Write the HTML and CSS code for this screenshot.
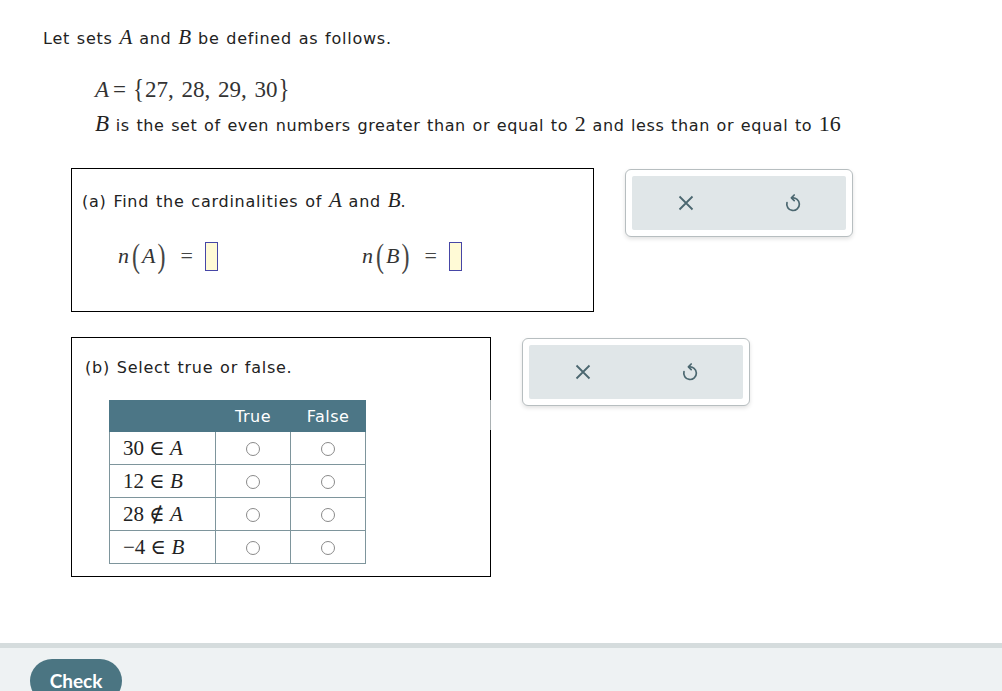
FILE: index.html
```html
<!DOCTYPE html>
<html>
<head>
<meta charset="utf-8">
<link rel="stylesheet" href="styles.css">
</head>
<body>
<div class="main">
  <p class="intro">Let sets <i class="m">A</i> and <i class="m">B</i> be defined as follows.</p>
  <div class="defs">
    <div class="def-a"><i class="m">A</i><span class="eq">=</span><span class="br">{</span>27, 28, 29, 30<span class="br">}</span></div>
    <div class="def-b"><i class="m">B</i> is the set of even numbers greater than or equal to <span class="num">2</span> and less than or equal to <span class="num">16</span></div>
  </div>

  <div class="row row-a">
    <div class="part part-a">
      <p class="prompt">(a) Find the cardinalities of <i class="m">A</i> and <i class="m">B</i>.</p>
      <div class="card-row">
        <div class="card card-1"><i class="n">n</i><span class="paren">(</span><i class="v">A</i><span class="paren">)</span><span class="eq2">=</span><span class="input"></span></div>
        <div class="card card-2"><i class="n">n</i><span class="paren">(</span><i class="v">B</i><span class="paren">)</span><span class="eq2">=</span><span class="input"></span></div>
      </div>
    </div>
    <div class="actions">
      <div class="actions-inner">
        <svg class="ic" width="22" height="22" viewBox="0 0 22 22"><path d="M4.5 4.5 L17.5 17.5 M17.5 4.5 L4.5 17.5" stroke="#4b6770" stroke-width="1.8" fill="none"/></svg>
        <svg class="ic" width="22" height="22" viewBox="0 0 22 22"><path d="M10 6 A6.3 6.3 0 1 1 5 10.5" stroke="#4b6770" stroke-width="1.7" fill="none" stroke-linecap="round"/><path d="M12.2 3 L9.4 5.9 L12.2 8.6" stroke="#4b6770" stroke-width="1.7" fill="none" stroke-linejoin="round" stroke-linecap="round"/></svg>
      </div>
    </div>
  </div>

  <div class="row row-b">
    <div class="part part-b">
      <p class="prompt">(b) Select true or false.</p>
      <table class="tf">
        <thead><tr><th class="c0"></th><th>True</th><th>False</th></tr></thead>
        <tbody>
          <tr><td class="lbl">30 ∈ <i>A</i></td><td><span class="radio"></span></td><td><span class="radio"></span></td></tr>
          <tr><td class="lbl">12 ∈ <i>B</i></td><td><span class="radio"></span></td><td><span class="radio"></span></td></tr>
          <tr><td class="lbl">28 ∉ <i>A</i></td><td><span class="radio"></span></td><td><span class="radio"></span></td></tr>
          <tr><td class="lbl">−4 ∈ <i>B</i></td><td><span class="radio"></span></td><td><span class="radio"></span></td></tr>
        </tbody>
      </table>
      <span class="edge"></span>
    </div>
    <div class="actions">
      <div class="actions-inner">
        <svg class="ic" width="22" height="22" viewBox="0 0 22 22"><path d="M4.5 4.5 L17.5 17.5 M17.5 4.5 L4.5 17.5" stroke="#4b6770" stroke-width="1.8" fill="none"/></svg>
        <svg class="ic" width="22" height="22" viewBox="0 0 22 22"><path d="M10 6 A6.3 6.3 0 1 1 5 10.5" stroke="#4b6770" stroke-width="1.7" fill="none" stroke-linecap="round"/><path d="M12.2 3 L9.4 5.9 L12.2 8.6" stroke="#4b6770" stroke-width="1.7" fill="none" stroke-linejoin="round" stroke-linecap="round"/></svg>
      </div>
    </div>
  </div>
</div>
<div class="footer">
  <button class="check">Check</button>
</div>
</body>
</html>
```

FILE: styles.css
```css
html, body {
  margin: 0;
  padding: 0;
  background: #fff;
}
body {
  font-family: "DejaVu Sans", Verdana, sans-serif;
  font-size: 16px;
  letter-spacing: 0.75px;
  word-spacing: 1px;
  color: #222;
  overflow: hidden;
}
.main {
  height: 643px;
  box-sizing: border-box;
  padding: 26px 0 0 43px;
}
p { margin: 0; }
.m {
  font-family: "Liberation Serif", "Times New Roman", serif;
  font-style: italic;
  font-size: 21px;
  letter-spacing: 0;
}
.intro {
  line-height: 22px;
}
.defs {
  margin: 27px 0 0 52px;
  font-family: "Liberation Serif", serif;
  font-size: 23px;
  letter-spacing: 0;
  color: #333;
}
.def-a {
  line-height: 26px;
  word-spacing: 2px;
}
.def-a .m { font-size: 23px; }
.def-a .eq { margin: 0 6px 0 4px; }
.def-a .br {
  display: inline-block;
  transform: scaleY(1.2);
  margin: 0 1px;
}
.def-b {
  margin-top: 9px;
  line-height: 24px;
  font-family: "DejaVu Sans", sans-serif;
  font-size: 16px;
  letter-spacing: 0.6px;
  word-spacing: 1px;
  color: #222;
}
.def-b .m { font-size: 23px; }
.num {
  font-family: "Liberation Serif", serif;
  font-size: 22px;
  letter-spacing: 0;
}
.row {
  display: flex;
  align-items: flex-start;
  margin-left: 28px;
  gap: 31px;
}
.row-a { margin-top: 30px; }
.row-b { margin-top: 25px; }
.part {
  border: 1px solid #000;
  box-sizing: border-box;
  position: relative;
}
.part-a {
  width: 523px;
  height: 144px;
  padding: 20px 0 0 10px;
}
.part-b {
  width: 420px;
  height: 240px;
  padding: 19px 0 0 13px;
}
.prompt {
  line-height: 22px;
}
.card-row {
  display: flex;
  margin-top: 25px;
  padding-left: 36px;
}
.card {
  display: flex;
  align-items: center;
  height: 36px;
  font-family: "Liberation Serif", serif;
  font-size: 22px;
  letter-spacing: 0;
  color: #333;
}
.card-1 { width: 244px; }
.card .n, .card .v { font-style: italic; }
.card .n { margin-right: 1px; }
.paren {
  display: inline-block;
  font-size: 24px;
  transform: scaleY(1.4);
  color: #444;
  margin: 0 2px;
}
.eq2 {
  margin: 0 12px 0 13px;
  color: #444;
}
.input {
  display: inline-block;
  width: 11px;
  height: 27px;
  border: 1.5px solid #4646a6;
  background: #fffad6;
}
.actions {
  width: 228px;
  height: 68px;
  box-sizing: border-box;
  border: 1px solid #b7bec0;
  border-radius: 6px;
  padding: 6px;
  background: #fff;
  box-shadow: 0 2px 4px rgba(0,0,0,0.12);
}
.row-a .actions { margin-top: 1px; }
.row-b .actions { margin-top: 1px; }
.actions-inner {
  height: 100%;
  background: #e0e6e8;
  border-radius: 2px;
  display: flex;
  align-items: center;
  justify-content: space-around;
}
.ic { display: block; }
.tf {
  border-collapse: collapse;
  margin: 21px 0 0 24px;
}
.tf th {
  background: #4c7686;
  color: #fff;
  font-weight: normal;
  font-size: 16px;
  letter-spacing: 0.5px;
  height: 30px;
  padding: 0;
  width: 74px;
  border: 1px solid #4c7686;
  border-left-color: #7e9aa3;
}
.tf th.c0 {
  width: 105px;
  border-left-color: #4c7686;
}
.tf td {
  border: 1px solid #7e959c;
  height: 32px;
  padding: 0;
  text-align: center;
  vertical-align: middle;
}
.tf td.lbl {
  text-align: left;
  padding-left: 13px;
  font-family: "Liberation Serif", "DejaVu Serif", serif;
  font-size: 21px;
  letter-spacing: 0;
  word-spacing: 0;
  color: #222;
}
.tf td.lbl i { font-style: italic; }
.radio {
  display: inline-block;
  width: 12px;
  height: 12px;
  border: 1px solid #8a8a8a;
  border-radius: 50%;
  vertical-align: middle;
}
.edge {
  position: absolute;
  right: -1px;
  top: 62px;
  width: 1px;
  height: 30px;
  background: #a9b0b2;
}
.footer {
  height: 48px;
  border-top: 5px solid #d5dcdd;
  background: #eef2f3;
  padding: 11px 0 0 30px;
  box-sizing: border-box;
}
.check {
  width: 92px;
  height: 44px;
  border: none;
  border-radius: 22px;
  background: #4b7582;
  color: #fff;
  font-family: "Lato", "DejaVu Sans", sans-serif;
  font-weight: bold;
  font-size: 19px;
  letter-spacing: 0;
  padding: 0 0 10px 0;
  line-height: 44px;
  display: flex;
  align-items: flex-start;
  justify-content: center;
}
```
